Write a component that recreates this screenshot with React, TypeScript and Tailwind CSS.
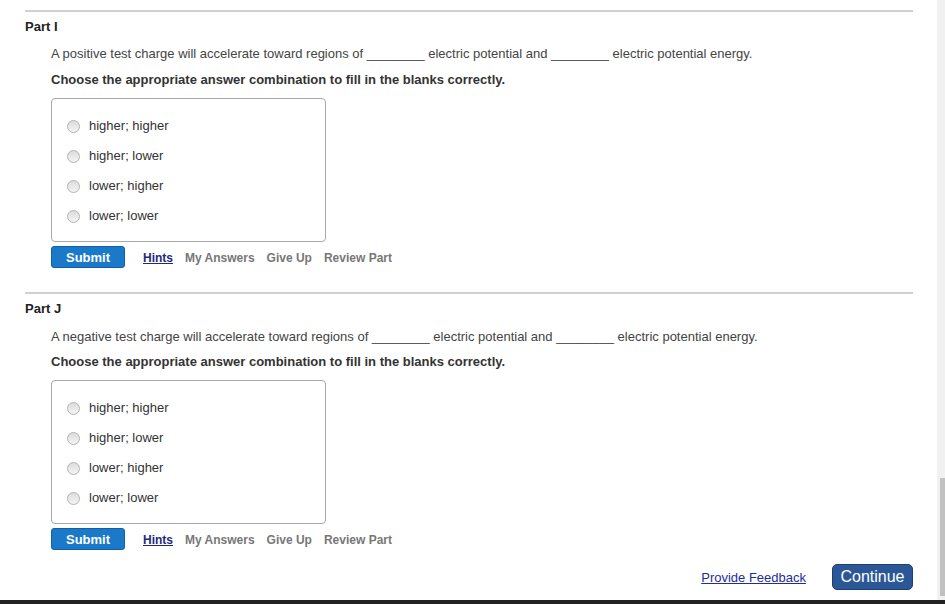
import React from 'react';

const options = ['higher; higher', 'higher; lower', 'lower; higher', 'lower; lower'];

const Radio: React.FC = () => (
  <span className="inline-block w-[13px] h-[13px] rounded-full border border-[#b3b3b3] bg-gradient-to-b from-[#dcdcdc] to-[#f4f4f4] shrink-0" />
);

const PartBlock: React.FC<{ label: string; sign: string; first?: boolean }> = ({ label, sign, first }) => (
  <section className={first ? '' : 'mt-[24px]'}>
    <div className="h-[2px] bg-[#d0d0d0]" />
    <h2 className="mt-[7px] text-[13px] leading-[16px] font-bold text-[#222]">{label}</h2>
    <div className="pl-[26px]">
      <p className={`${first ? 'mt-[11px]' : 'mt-[12px]'} text-[13px] leading-[16px] text-[#444]`}>
        A {sign} test charge will accelerate toward regions of ________ electric potential and ________ electric potential energy.
      </p>
      <p className={`${first ? 'mt-[10px]' : 'mt-[9px]'} text-[13px] leading-[16px] font-bold text-[#333]`}>
        Choose the appropriate answer combination to fill in the blanks correctly.
      </p>
      <div className="mt-[10px] w-[275px] h-[144px] border border-[#a9a9a9] rounded-[4px] pt-[12px] pb-[9px] pl-[15px]">
        {options.map((o) => (
          <div key={o} className="h-[30px] flex items-center">
            <Radio />
            <span className="ml-[9px] text-[13px] text-[#333]">{o}</span>
          </div>
        ))}
      </div>
      <div className="mt-[4px] flex items-center h-[22px]">
        <button className="w-[74px] h-[22px] rounded-[3px] bg-[#1b79c9] border border-[#14609f] text-white text-[13px] font-bold leading-none">
          Submit
        </button>
        <div className="ml-[18px] pt-[1px] flex items-center gap-[12px] text-[12px] font-bold text-[#777]">
          <span className="text-[#1f2a7a] underline">Hints</span>
          <span>My Answers</span>
          <span>Give Up</span>
          <span>Review Part</span>
        </div>
      </div>
    </div>
  </section>
);

export default function App() {
  return (
    <div className="w-[945px] h-[604px] bg-white flex flex-col overflow-hidden" style={{ fontFamily: '"Liberation Sans", Arial, sans-serif' }}>
      <div className="flex-1 flex min-h-0">
        <main className="flex-1 pt-[10px] pl-[25px] pr-[24px]">
          <PartBlock label="Part I" sign="positive" first />
          <PartBlock label="Part J" sign="negative" />
          <div className="mt-[14px] flex items-center justify-end">
            <a href="#" className="pt-[1px] text-[13px] text-[#1d2d99] underline">Provide Feedback</a>
            <button className="ml-[26px] w-[81px] h-[26px] rounded-[5px] bg-[#2b5797] border border-[#1f406f] text-white text-[16px] leading-none">
              Continue
            </button>
          </div>
        </main>
        <div className="w-[8px] bg-[#f1f1f1] flex flex-col justify-end pb-[4px]">
          <div className="ml-[3px] w-[5px] h-[118px] bg-[#c1c1c1]" />
        </div>
      </div>
      <div className="h-[4px] bg-[#222]" />
    </div>
  );
}
